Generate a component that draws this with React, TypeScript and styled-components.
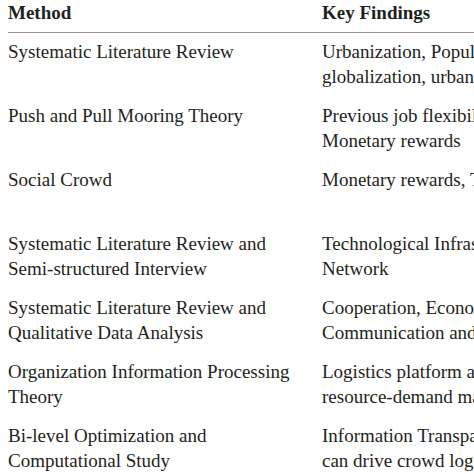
import React from "react";
import styled, { createGlobalStyle } from "styled-components";

const Global = createGlobalStyle`
  html, body {
    margin: 0;
    padding: 0;
    background: #ffffff;
    overflow: hidden;
  }
  body {
    width: 474px;
    height: 474px;
  }
`;

const Page = styled.div`
  width: 474px;
  height: 474px;
  overflow: hidden;
  padding-left: 8px;
  box-sizing: border-box;
  font-family: "Liberation Serif", "Times New Roman", serif;
  font-size: 19px;
  line-height: 25.5px;
  color: #231f20;
`;

const Table = styled.div`
  display: grid;
  grid-template-columns: 314px max-content;
  width: max-content;
`;

const HeadCell = styled.div`
  font-weight: 700;
  padding-bottom: 6px;
  border-bottom: 1px solid #9c8e93;
  white-space: nowrap;
`;

const HeadFill = styled.div`
  grid-column: 1 / -1;
`;

const Cell = styled.div<{ $first?: boolean }>`
  padding-top: ${(p) => (p.$first ? "6px" : "6px")};
  padding-bottom: 7px;
  height: 51px;
  white-space: nowrap;
`;

const Line = styled.div`
  white-space: nowrap;
`;

const rows: [string[], string[]][] = [
  [["Systematic Literature Review"], ["Urbanization, Population growth,", "globalization, urbanization"]],
  [["Push and Pull Mooring Theory"], ["Previous job flexibility,", "Monetary rewards"]],
  [["Social Crowd"], ["Monetary rewards, Trust"]],
  [["Systematic Literature Review and", "Semi-structured Interview"], ["Technological Infrastructure,", "Network"]],
  [["Systematic Literature Review and", "Qualitative Data Analysis"], ["Cooperation, Economic factors,", "Communication and trust"]],
  [["Organization Information Processing", "Theory"], ["Logistics platform and", "resource-demand matching"]],
  [["Bi-level Optimization and", "Computational Study"], ["Information Transparency", "can drive crowd logistics"]],
];

export default function App() {
  return (
    <>
      <Global />
      <Page>
        <Table>
          <HeadCell>Method</HeadCell>
          <HeadCell>Key Findings</HeadCell>
          {rows.map(([m, k], i) => (
            <React.Fragment key={i}>
              <Cell>
                {m.map((t, j) => (
                  <Line key={j}>{t}</Line>
                ))}
              </Cell>
              <Cell>
                {k.map((t, j) => (
                  <Line key={j}>{t}</Line>
                ))}
              </Cell>
            </React.Fragment>
          ))}
        </Table>
      </Page>
    </>
  );
}
